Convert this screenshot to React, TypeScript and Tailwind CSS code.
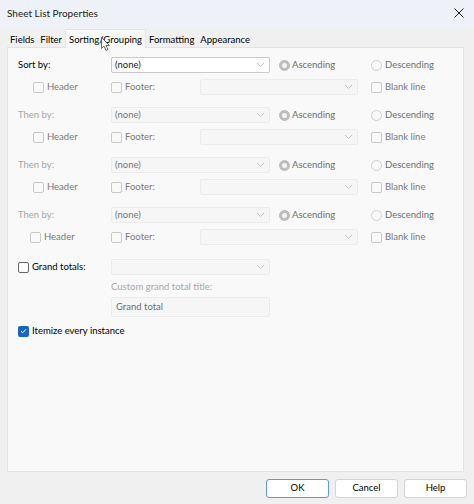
const font = "font-['Segoe_UI','Lato','Noto_Sans',sans-serif]";

function Chevron({ light }: { light?: boolean }) {
  return (
    <svg width="9" height="6" viewBox="0 0 9 6" className="shrink-0">
      <path d="M1 1 L4.5 4.5 L8 1" fill="none" stroke={light ? "#c4c4c4" : "#6a6a6a"} strokeWidth="1" />
    </svg>
  );
}

function Combo({ text, width, enabled, dim }: { text?: string; width: string; enabled?: boolean; dim?: boolean }) {
  return (
    <div
      className={`${width} h-[16px] flex items-center justify-between pl-[3px] pr-[4px] rounded-[2px] border ${
        enabled ? "bg-white border-[#c9c9c9]" : "bg-[#f6f6f6] border-[#ececec]"
      }`}
    >
      <span className={enabled ? "text-[#1a1a1a]" : "text-[#777]"}>{text}</span>
      <Chevron light={dim || !enabled} />
    </div>
  );
}

function Box({ checked, dark }: { checked?: boolean; dark?: boolean }) {
  if (checked) {
    return (
      <span className="w-[11px] h-[11px] rounded-[2px] bg-[#1766c4] flex items-center justify-center shrink-0">
        <svg width="7" height="6" viewBox="0 0 7 6">
          <path d="M1 3.2 L2.7 4.8 L6 1.2" fill="none" stroke="white" strokeWidth="1" />
        </svg>
      </span>
    );
  }
  return (
    <span
      className={`w-[11px] h-[11px] rounded-[2px] border shrink-0 ${
        dark ? "border-[#666] bg-white" : "border-[#c8c8c8] bg-[#f9f9f9]"
      }`}
    />
  );
}

function Radio({ on }: { on?: boolean }) {
  return (
    <span
      className={`w-[11px] h-[11px] rounded-full border shrink-0 flex items-center justify-center ${
        on ? "border-[#bdbdbd] bg-[#bdbdbd]" : "border-[#cfcfcf] bg-[#f9f9f9]"
      }`}
    >
      {on && <span className="w-[5px] h-[5px] rounded-full bg-[#f4f4f4]" />}
    </span>
  );
}

function SortGroup({ label, first, headerShift }: { label: string; first?: boolean; headerShift?: string }) {
  return (
    <div className="flex flex-col gap-[6px]">
      <div className="flex items-center h-[16px]">
        <span className={`w-[93px] ${first ? "text-black" : "text-[#a6a6a6]"}`}>{label}</span>
        <Combo text="(none)" width="w-[159px]" enabled={first} dim />
        <div className="w-[92px] ml-[9px] flex items-center gap-[2px] text-[#6e6e6e]">
          <Radio on />
          <span>Ascending</span>
        </div>
        <div className="flex items-center gap-[3px] text-[#6e6e6e]">
          <Radio />
          <span>Descending</span>
        </div>
      </div>
      <div className="flex items-center h-[16px]">
        <div className={`${headerShift ?? "w-[93px] pl-[15px]"} flex items-center gap-[3px] text-[#7a7a7a]`}>
          <Box />
          <span>Header</span>
        </div>
        <div className="w-[89px] flex items-center gap-[3px] text-[#7a7a7a]">
          <Box />
          <span>Footer:</span>
        </div>
        <Combo width="w-[158px]" />
        <div className="ml-[13px] flex items-center gap-[3px] text-[#7a7a7a]">
          <Box />
          <span>Blank line</span>
        </div>
      </div>
    </div>
  );
}

export default function App() {
  const tabs = ["Fields", "Filter", "Sorting/Grouping", "Formatting", "Appearance"];
  return (
    <div className={`${font} w-[474px] h-[504px] bg-[#f0f0f0] text-[9.5px] text-black flex flex-col relative overflow-hidden`}>
      {/* title bar */}
      <div className="h-[29px] bg-[#eef2f8] flex items-center justify-between pl-[7px] pr-[10px] pb-[3px]">
        <span className="text-[10px] text-[#1a1a1a]">Sheet List Properties</span>
        <svg width="10" height="10" viewBox="0 0 10 10">
          <path d="M0.5 0.5 L9.5 9.5 M9.5 0.5 L0.5 9.5" stroke="#222" strokeWidth="1" />
        </svg>
      </div>

      {/* tabs */}
      <div className="flex items-end h-[18px] pl-[7px]">
        {tabs.map((t) =>
          t === "Sorting/Grouping" ? (
            <div
              key={t}
              className="h-[19px] px-[3px] pt-[2px] flex items-center bg-[#f9f9f9] border border-b-0 border-[#e3e3e3] rounded-t-[2px] relative z-10 mb-[-1px]"
            >
              {t}
            </div>
          ) : (
            <div key={t} className="h-[18px] px-[3px] pt-[4px] flex items-center">
              {t}
            </div>
          )
        )}
      </div>

      {/* tab page */}
      <div className="mx-[7px] w-[457px] h-[425px] bg-[#f9f9f9] border border-[#e3e3e3] pt-[9px] pl-[10px] flex flex-col">
        <div className="flex flex-col gap-[12px]">
          <SortGroup label="Sort by:" first />
          <SortGroup label="Then by:" />
          <SortGroup label="Then by:" />
          <SortGroup label="Then by:" headerShift="w-[93px] pl-[12px]" />
        </div>

        <div className="flex items-center h-[16px] mt-[14px]">
          <div className="w-[93px] flex items-center gap-[3px]">
            <Box dark />
            <span>Grand totals:</span>
          </div>
          <Combo width="w-[159px]" />
        </div>
        <div className="ml-[93px] mt-[5px] flex flex-col gap-[3px]">
          <span className="text-[#a8a8a8]">Custom grand total title:</span>
          <div className="w-[159px] h-[20px] flex items-center pl-[4px] bg-[#f6f6f6] border border-[#ececec] rounded-[2px] text-[#6e6e6e]">
            Grand total
          </div>
        </div>
        <div className="flex items-center gap-[3px] mt-[7px]">
          <Box checked />
          <span>Itemize every instance</span>
        </div>
      </div>

      {/* buttons */}
      <div className="flex justify-end gap-[6px] pr-[7px] mt-[7px]">
        <button className="w-[63px] h-[19px] bg-white border border-[#5a9bd8] rounded-[3px] text-[9.5px]">OK</button>
        <button className="w-[63px] h-[19px] bg-white border border-[#d4d4d4] rounded-[3px] text-[9.5px]">Cancel</button>
        <button className="w-[63px] h-[19px] bg-white border border-[#d4d4d4] rounded-[3px] text-[9.5px]">Help</button>
      </div>

      {/* mouse pointer over the tab strip */}
      <svg className="absolute left-[101px] top-[37px] z-20" width="11" height="15" viewBox="0 0 11 15">
        <path d="M0.5 0.5 L0.5 11.5 L3 9 L5 13.5 L7 12.5 L5 8.5 L8.5 8.5 Z" fill="white" stroke="#444" strokeWidth="0.8" />
      </svg>
    </div>
  );
}
